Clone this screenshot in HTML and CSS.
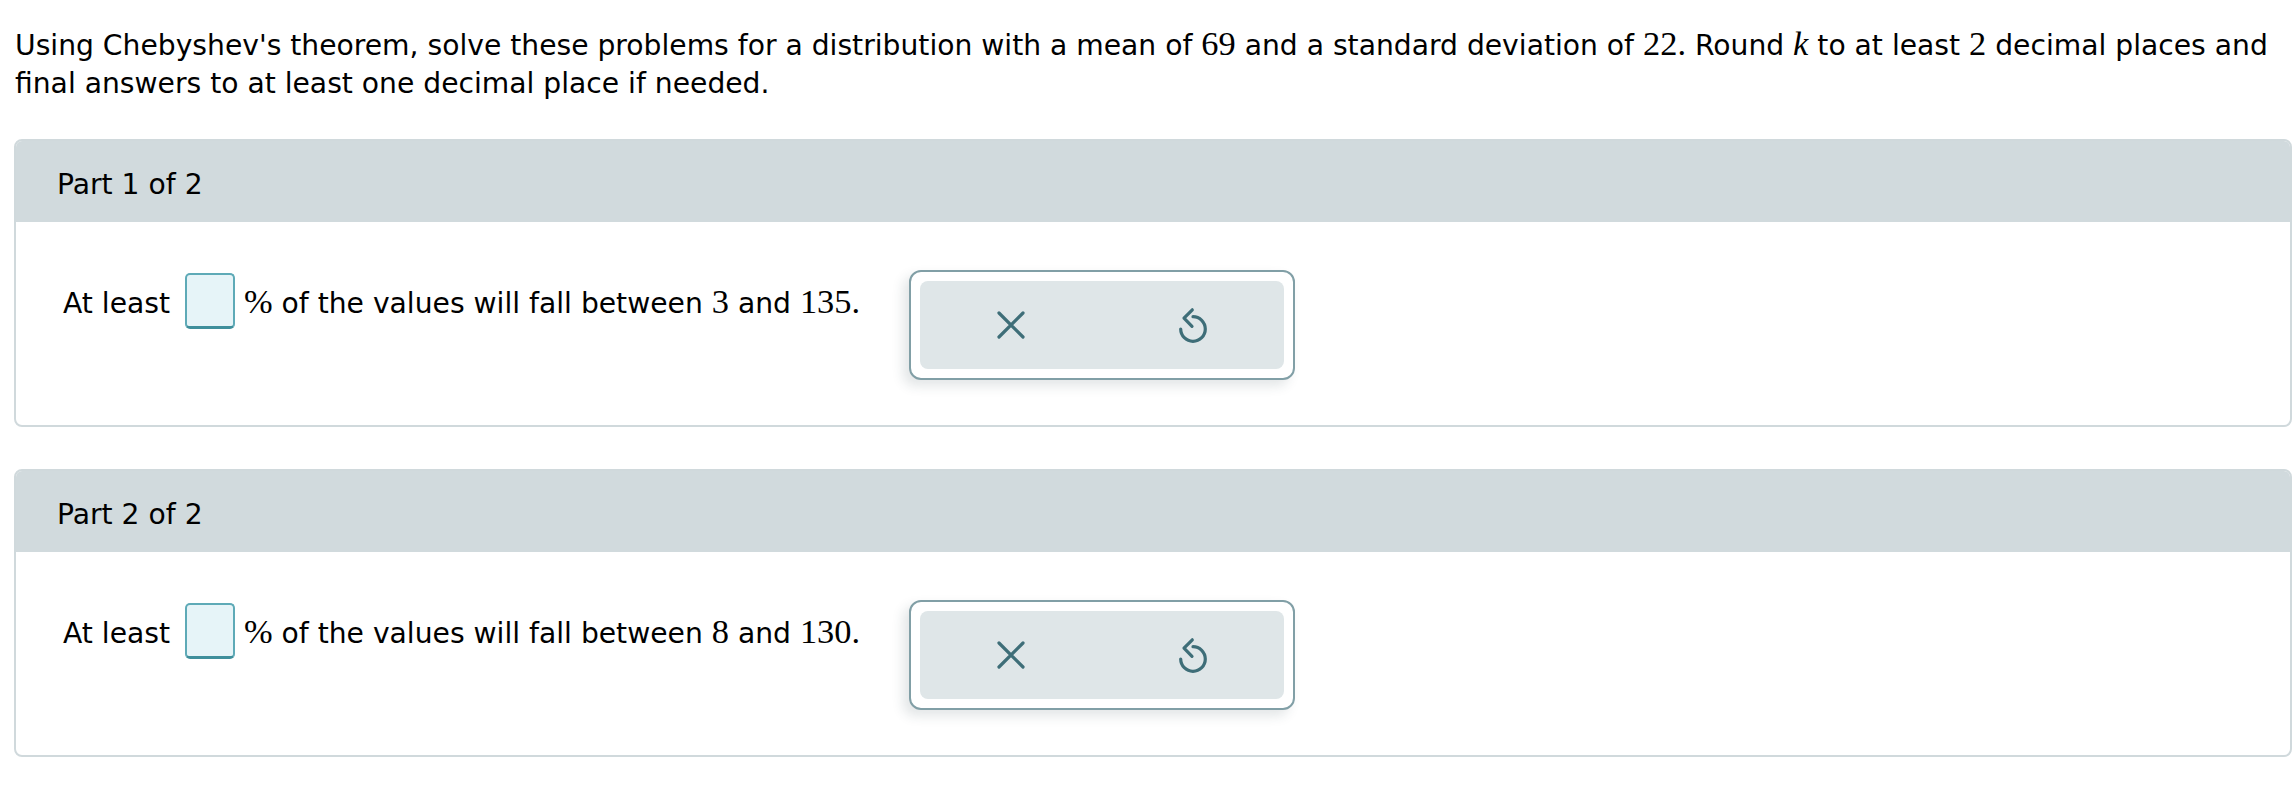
FILE: index.html
```html
<!DOCTYPE html>
<html>
<head>
<meta charset="utf-8">
<link rel="stylesheet" href="styles.css">
</head>
<body>
<div class="page">
  <p class="intro"><span class="line">Using Chebyshev's theorem, solve these problems for a distribution with a mean of <span class="m">69</span> and a standard deviation of <span class="m">22.</span> Round <span class="m mi">k</span> to at least <span class="m">2</span> decimal places and</span><br>final answers to at least one decimal place if needed.</p>

  <section class="part">
    <div class="part-head">Part 1 of 2</div>
    <div class="part-body">
      <div class="sentence">At least <span class="ans"></span><span class="m">%</span> of the values will fall between <span class="m">3</span> and <span class="m">135.</span></div>
      <div class="panel">
        <div class="panel-inner">
          <div class="btn"><svg class="ico" viewBox="0 0 40 40"><path d="M8 8 L32 32 M32 8 L8 32"/></svg></div>
          <div class="btn"><svg class="ico" viewBox="0 0 40 40"><path d="M20 11.7 A12.3 12.3 0 1 1 7.7 24"/><path d="M19.3 4.8 L11 13.2 L19 21.4"/></svg></div>
        </div>
      </div>
    </div>
  </section>

  <section class="part">
    <div class="part-head">Part 2 of 2</div>
    <div class="part-body">
      <div class="sentence">At least <span class="ans"></span><span class="m">%</span> of the values will fall between <span class="m">8</span> and <span class="m">130.</span></div>
      <div class="panel">
        <div class="panel-inner">
          <div class="btn"><svg class="ico" viewBox="0 0 40 40"><path d="M8 8 L32 32 M32 8 L8 32"/></svg></div>
          <div class="btn"><svg class="ico" viewBox="0 0 40 40"><path d="M20 11.7 A12.3 12.3 0 1 1 7.7 24"/><path d="M19.3 4.8 L11 13.2 L19 21.4"/></svg></div>
        </div>
      </div>
    </div>
  </section>
</div>
</body>
</html>
```

FILE: styles.css
```css
html, body {
  margin: 0;
  padding: 0;
  background: #ffffff;
}

body {
  font-family: "DejaVu Sans", Verdana, sans-serif;
  font-size: 28.2px;
  color: #000000;
}

.page {
  padding: 0 2px 0 14px;
}

.intro {
  margin: 27px 0 36px 1px;
  line-height: 38px;
}

.line {
  white-space: nowrap;
}

.m {
  font-family: "Liberation Serif", "Times New Roman", serif;
  font-size: 1.22em;
  line-height: 0;
}

.mi {
  font-style: italic;
}

.part {
  border: 2px solid #d0d9dc;
  border-radius: 8px;
  overflow: hidden;
  margin-bottom: 42px;
}

.part:last-child {
  margin-bottom: 0;
}

.part-head {
  background: #d1dadd;
  height: 81px;
  box-sizing: border-box;
  padding: 5px 0 0 41px;
  display: flex;
  align-items: center;
}

.part-body {
  display: flex;
  align-items: flex-start;
  padding: 48px 0 45px 47px;
}

.sentence {
  margin-top: 3px;
  white-space: nowrap;
}

.ans {
  display: inline-block;
  width: 50px;
  height: 56px;
  box-sizing: border-box;
  margin: 0 9px 0 6px;
  vertical-align: -16px;
  background: #e6f4f8;
  border: 2px solid #5eaab7;
  border-bottom: 3px solid #3f8f9c;
  border-radius: 5px;
}

.panel {
  margin-left: 49px;
  width: 386px;
  height: 110px;
  box-sizing: border-box;
  border: 2px solid #819fa6;
  border-radius: 12px;
  padding: 9px;
  background: #ffffff;
  box-shadow: -6px 6px 12px rgba(40, 60, 70, 0.13);
}

.panel-inner {
  height: 100%;
  background: #dfe6e8;
  border-radius: 8px;
  display: flex;
}

.btn {
  flex: 1;
  display: flex;
  align-items: center;
  justify-content: center;
}

.ico {
  width: 40px;
  height: 40px;
  fill: none;
  stroke: #3e6e78;
  stroke-width: 3.2;
  stroke-linecap: round;
  stroke-linejoin: round;
}
```
